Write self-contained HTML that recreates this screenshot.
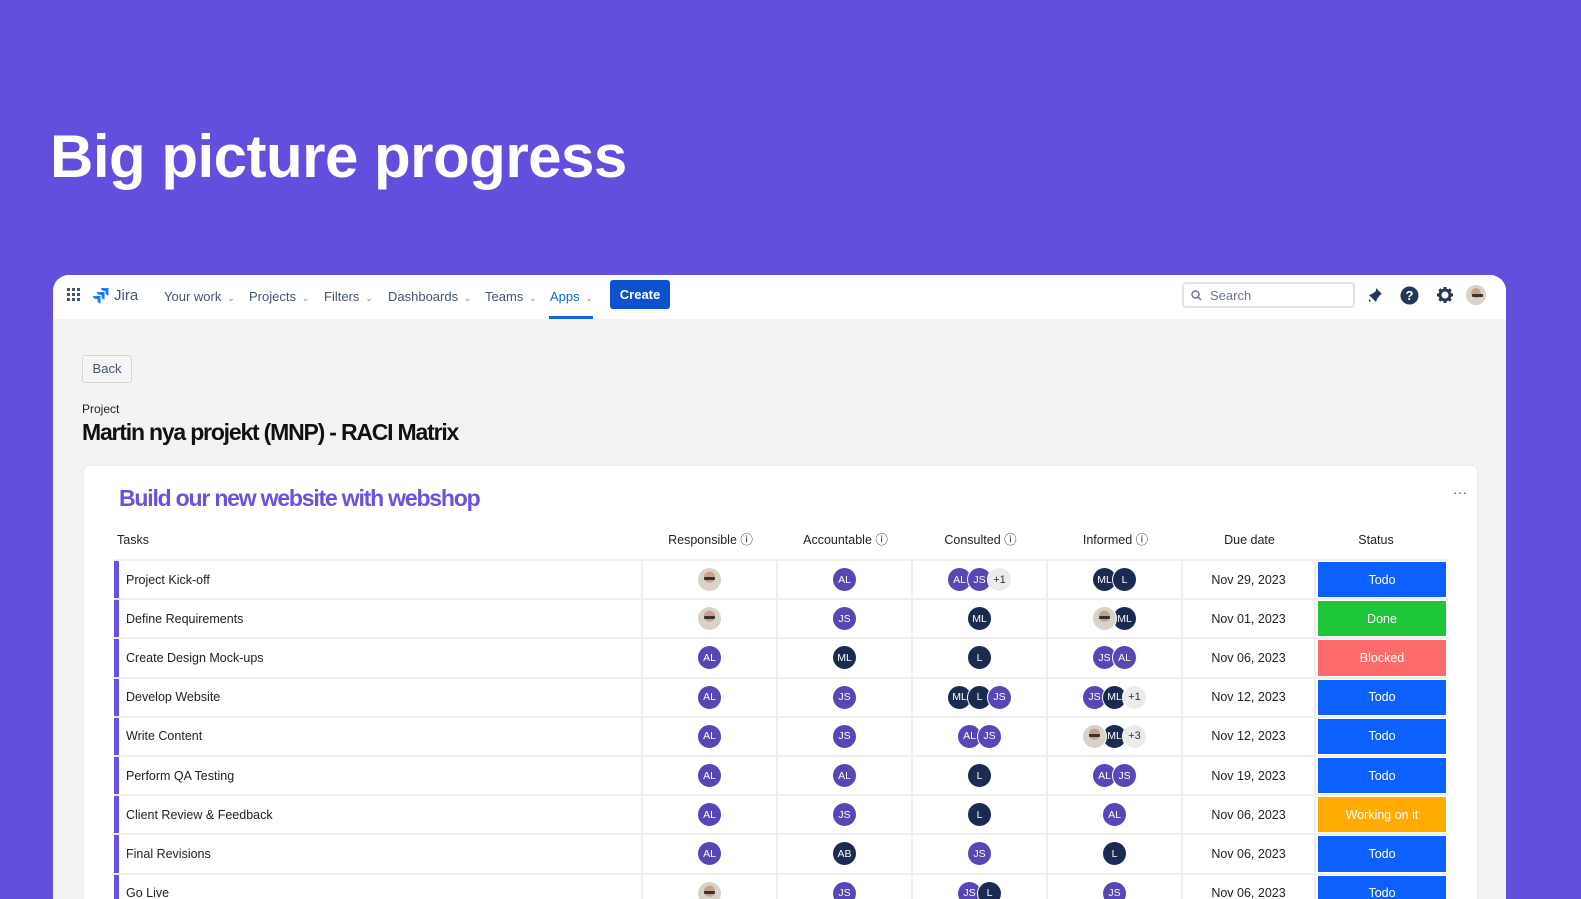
<!DOCTYPE html>
<html><head><meta charset="utf-8"><style>
*{box-sizing:border-box;margin:0;padding:0}
html{overflow:hidden;height:899px}
body{width:1581px;height:899px;overflow:hidden;background:#634fde;font-family:"Liberation Sans",Arial,sans-serif;position:relative}
h1{position:absolute;left:50px;top:122px;color:#fff;font-size:60px;font-weight:700;letter-spacing:-0.5px}
.win{position:absolute;left:53px;top:275px;width:1453px;height:624px;background:#f3f3f3;border-radius:16px 16px 0 0;overflow:hidden}
.nav{height:44px;background:#fff;position:relative;font-size:13px;color:#44546f}
.nav span{position:absolute;top:14px}
.chev{font-size:9px;color:#7a869a;margin-left:2px}
.create{position:absolute;left:557px;top:5px;width:60px;height:29px;background:#0c52cf;color:#fff;border-radius:3px;font-weight:700;font-size:13px;text-align:center;line-height:29px}
.search{position:absolute;left:1129px;top:7px;width:173px;height:26px;border:2px solid #e1e3e7;border-radius:4px;font-size:13px;color:#6b778c;padding:4px 0 0 26px}
.back{position:absolute;left:29px;top:80px;width:50px;height:28px;border:1px solid #d6d6d6;border-radius:3px;background:#f5f5f5;font-size:13px;color:#44546f;text-align:center;line-height:26px}
.card{position:absolute;left:30px;top:190px;width:1395px;height:600px;background:#fff;border-radius:6px;border:1px solid #ececec}
.ttl{position:absolute;left:35px;top:19px;color:#6a52e0;font-size:23px;font-weight:700;letter-spacing:-1.2px}
.th{position:absolute;top:66px;font-size:12.5px;line-height:16px;height:16px;color:#222;text-align:center}
.rows{position:absolute;left:30px;top:93px}
.r{display:flex;height:39.2px;border-top:2px solid #efefef}
.c{border-right:2px solid #efefef;display:flex;align-items:center;justify-content:center;font-size:12.5px;color:#222}
.t{width:529px;justify-content:flex-start;padding-left:7px;border-left:5px solid #6a52e0}
.w{width:135px}.d{width:133px}
.s{width:132px;padding:1px 2px;border:none}
.s div{width:100%;height:100%;color:#fff;display:flex;align-items:center;justify-content:center;font-size:12.5px}
.a{width:25px;height:25px;border-radius:50%;display:inline-flex;align-items:center;justify-content:center;color:#fff;font-size:10.5px;border:1px solid #fff;margin-left:-5px}
.a:first-child{margin-left:0}
.p{background:#5a45b5}.n{background:#1b2a50}.g{background:#ebebeb;color:#333;font-size:11px}
.ph{background:radial-gradient(circle at 50% 40%,#c9a08a 0 30%,#d8d2c8 32% 100%);position:relative}
.ph::after{content:"";position:absolute;left:6px;top:9px;width:11px;height:3px;background:#333;border-radius:1px}
</style></head><body>
<h1>Big picture progress</h1>
<div class="win">
 <div class="nav">
  <svg style="position:absolute;left:14px;top:13px" width="14" height="14" viewBox="0 0 14 14" fill="#44546f"><rect x="0" y="0" width="3" height="3"/><rect x="5" y="0" width="3" height="3"/><rect x="10" y="0" width="3" height="3"/><rect x="0" y="5" width="3" height="3"/><rect x="5" y="5" width="3" height="3"/><rect x="10" y="5" width="3" height="3"/><rect x="0" y="10" width="3" height="3"/><rect x="5" y="10" width="3" height="3"/><rect x="10" y="10" width="3" height="3"/></svg>
  <svg style="position:absolute;left:40px;top:12px" width="17" height="17" viewBox="0 0 17 17" fill="#1d7afc"><path d="M16 1H8a3 3 0 0 0 3 3h1.5v1.5a3 3 0 0 0 3 3V1z"/><path d="M12 5H4a3 3 0 0 0 3 3h1.5v1.5a3 3 0 0 0 3 3V5z"/><path d="M8 9H0a3 3 0 0 0 3 3h1.5v1.5a3 3 0 0 0 3 3V9z"/></svg>
  <span style="left:61px;top:12px;font-size:15px;color:#44546f">Jira</span>
  <span style="left:111px">Your work <i class="chev">⌄</i></span>
  <span style="left:196px">Projects <i class="chev">⌄</i></span>
  <span style="left:271px">Filters <i class="chev">⌄</i></span>
  <span style="left:335px">Dashboards <i class="chev">⌄</i></span>
  <span style="left:432px">Teams <i class="chev">⌄</i></span>
  <span style="left:497px;color:#0c66e4">Apps <i class="chev">⌄</i></span>
  <div style="position:absolute;left:496px;top:41px;width:44px;height:3px;background:#0c66e4"></div>
  <div class="create">Create</div>
  <div class="search"><svg style="position:absolute;left:7px;top:6px" width="11" height="11" viewBox="0 0 11 11" fill="none" stroke="#6b778c" stroke-width="1.5"><circle cx="4.5" cy="4.5" r="3.5"/><path d="M7 7l3 3"/></svg>Search</div>
  <svg style="position:absolute;left:1314px;top:12px" width="16" height="16" viewBox="0 0 16 16" fill="#243757"><path d="M9 1l6 6-2 1-3 4-1 3-7-7 3-1 4-3z"/><path d="M2 12l2 2-2 1z"/></svg>
  <svg style="position:absolute;left:1347px;top:11px" width="19" height="19" viewBox="0 0 19 19"><circle cx="9.5" cy="9.5" r="9" fill="#243757"/><text x="9.5" y="14" text-anchor="middle" fill="#fff" font-size="13" font-weight="700" font-family="Liberation Sans">?</text></svg>
  <svg style="position:absolute;left:1383px;top:11px" width="18" height="18" viewBox="0 0 18 18"><circle cx="9" cy="9" r="5" fill="none" stroke="#243757" stroke-width="3"/><g stroke="#243757" stroke-width="3"><path d="M9 1v3M9 14v3M1 9h3M14 9h3M3.3 3.3l2.1 2.1M12.6 12.6l2.1 2.1M3.3 14.7l2.1-2.1M12.6 5.4l2.1-2.1"/></g></svg>
  <div class="a ph" style="position:absolute;left:1417px;top:9px;width:22px;height:22px"></div>
 </div>
 <div class="back">Back</div>
 <div style="position:absolute;left:29px;top:127px;font-size:12px;color:#222">Project</div>
 <div style="position:absolute;left:29px;top:144px;font-size:23px;font-weight:700;color:#111;letter-spacing:-1.2px">Martin nya projekt (MNP) - RACI Matrix</div>
 <div style="position:absolute;left:37px;top:452px;font-size:14px;color:#555">···</div>
 <div class="card">
  <div class="ttl">Build our new website with webshop</div>
  <div style="position:absolute;right:10px;top:18px;font-size:14px;color:#555">···</div>
  <div class="th" style="left:33px">Tasks</div>
  <div class="th" style="left:559px;width:135px">Responsible ⓘ</div>
  <div class="th" style="left:694px;width:135px">Accountable ⓘ</div>
  <div class="th" style="left:829px;width:135px">Consulted ⓘ</div>
  <div class="th" style="left:964px;width:135px">Informed ⓘ</div>
  <div class="th" style="left:1099px;width:133px">Due date</div>
  <div class="th" style="left:1232px;width:120px">Status</div>
  <div class="rows">
   <div class="r"><div class="c t">Project Kick-off</div><div class="c w"><span class="a ph"></span></div><div class="c w"><span class="a p">AL</span></div><div class="c w"><span class="a p">AL</span><span class="a p">JS</span><span class="a g">+1</span></div><div class="c w"><span class="a n">ML</span><span class="a n">L</span></div><div class="c d">Nov 29, 2023</div><div class="c s"><div style="background:#0c60ff">Todo</div></div></div>
   <div class="r"><div class="c t">Define Requirements</div><div class="c w"><span class="a ph"></span></div><div class="c w"><span class="a p">JS</span></div><div class="c w"><span class="a n">ML</span></div><div class="c w"><span class="a ph"></span><span class="a n">ML</span></div><div class="c d">Nov 01, 2023</div><div class="c s"><div style="background:#1ec63a">Done</div></div></div>
   <div class="r"><div class="c t">Create Design Mock-ups</div><div class="c w"><span class="a p">AL</span></div><div class="c w"><span class="a n">ML</span></div><div class="c w"><span class="a n">L</span></div><div class="c w"><span class="a p">JS</span><span class="a p">AL</span></div><div class="c d">Nov 06, 2023</div><div class="c s"><div style="background:#ff6b6b">Blocked</div></div></div>
   <div class="r"><div class="c t">Develop Website</div><div class="c w"><span class="a p">AL</span></div><div class="c w"><span class="a p">JS</span></div><div class="c w"><span class="a n">ML</span><span class="a n">L</span><span class="a p">JS</span></div><div class="c w"><span class="a p">JS</span><span class="a n">ML</span><span class="a g">+1</span></div><div class="c d">Nov 12, 2023</div><div class="c s"><div style="background:#0c60ff">Todo</div></div></div>
   <div class="r"><div class="c t">Write Content</div><div class="c w"><span class="a p">AL</span></div><div class="c w"><span class="a p">JS</span></div><div class="c w"><span class="a p">AL</span><span class="a p">JS</span></div><div class="c w"><span class="a ph"></span><span class="a n">ML</span><span class="a g">+3</span></div><div class="c d">Nov 12, 2023</div><div class="c s"><div style="background:#0c60ff">Todo</div></div></div>
   <div class="r"><div class="c t">Perform QA Testing</div><div class="c w"><span class="a p">AL</span></div><div class="c w"><span class="a p">AL</span></div><div class="c w"><span class="a n">L</span></div><div class="c w"><span class="a p">AL</span><span class="a p">JS</span></div><div class="c d">Nov 19, 2023</div><div class="c s"><div style="background:#0c60ff">Todo</div></div></div>
   <div class="r"><div class="c t">Client Review &amp; Feedback</div><div class="c w"><span class="a p">AL</span></div><div class="c w"><span class="a p">JS</span></div><div class="c w"><span class="a n">L</span></div><div class="c w"><span class="a p">AL</span></div><div class="c d">Nov 06, 2023</div><div class="c s"><div style="background:#ffab00">Working on it</div></div></div>
   <div class="r"><div class="c t">Final Revisions</div><div class="c w"><span class="a p">AL</span></div><div class="c w"><span class="a n">AB</span></div><div class="c w"><span class="a p">JS</span></div><div class="c w"><span class="a n">L</span></div><div class="c d">Nov 06, 2023</div><div class="c s"><div style="background:#0c60ff">Todo</div></div></div>
   <div class="r"><div class="c t">Go Live</div><div class="c w"><span class="a ph"></span></div><div class="c w"><span class="a p">JS</span></div><div class="c w"><span class="a p">JS</span><span class="a n">L</span></div><div class="c w"><span class="a p">JS</span></div><div class="c d">Nov 06, 2023</div><div class="c s"><div style="background:#0c60ff">Todo</div></div></div>
  </div>
 </div>
</div>
</body></html>
